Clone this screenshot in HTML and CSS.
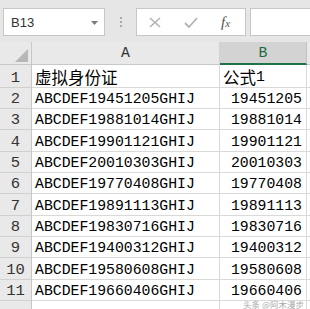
FILE: index.html
```html
<!DOCTYPE html>
<html lang="zh">
<head>
<meta charset="utf-8">
<title>Sheet</title>
<link rel="stylesheet" href="styles.css">
</head>
<body>
<div class="app">
  <div class="toolbar">
    <div class="namebox">
      <span class="name">B13</span>
      <svg class="caret" width="7" height="4" viewBox="0 0 7 4"><path d="M0 0H7L3.5 4Z" fill="#7a7a7a"/></svg>
    </div>
    <div class="grip">
      <span></span><span></span><span></span>
    </div>
    <div class="fbuttons">
      <svg class="ico" width="12" height="11" viewBox="0 0 12 11"><path d="M1 1L11 10M11 1L1 10" stroke="#b3b3b3" stroke-width="1.6" fill="none"/></svg>
      <svg class="ico" width="14" height="11" viewBox="0 0 14 11"><path d="M1 6L5 10L13 1" stroke="#b3b3b3" stroke-width="1.8" fill="none"/></svg>
      <span class="fx">f<small>x</small></span>
    </div>
    <div class="finput"></div>
  </div>

  <div class="sheet">
    <div class="corner"><span class="tri"></span></div>
    <div class="colhead">A</div>
    <div class="colhead sel">B</div>
    <div class="colhead"></div>

    <div class="rowhead">1</div><div class="cell cjk">虚拟身份证</div><div class="cell cjk">公式<span class="lat">1</span></div><div class="cell"></div>
    <div class="rowhead">2</div><div class="cell">ABCDEF19451205GHIJ</div><div class="cell num">19451205</div><div class="cell"></div>
    <div class="rowhead">3</div><div class="cell">ABCDEF19881014GHIJ</div><div class="cell num">19881014</div><div class="cell"></div>
    <div class="rowhead">4</div><div class="cell">ABCDEF19901121GHIJ</div><div class="cell num">19901121</div><div class="cell"></div>
    <div class="rowhead">5</div><div class="cell">ABCDEF20010303GHIJ</div><div class="cell num">20010303</div><div class="cell"></div>
    <div class="rowhead">6</div><div class="cell">ABCDEF19770408GHIJ</div><div class="cell num">19770408</div><div class="cell"></div>
    <div class="rowhead">7</div><div class="cell">ABCDEF19891113GHIJ</div><div class="cell num">19891113</div><div class="cell"></div>
    <div class="rowhead">8</div><div class="cell">ABCDEF19830716GHIJ</div><div class="cell num">19830716</div><div class="cell"></div>
    <div class="rowhead">9</div><div class="cell">ABCDEF19400312GHIJ</div><div class="cell num">19400312</div><div class="cell"></div>
    <div class="rowhead">10</div><div class="cell">ABCDEF19580608GHIJ</div><div class="cell num">19580608</div><div class="cell"></div>
    <div class="rowhead">11</div><div class="cell">ABCDEF19660406GHIJ</div><div class="cell num">19660406</div><div class="cell"></div>
    <div class="rowhead"></div><div class="cell"></div><div class="cell"></div><div class="cell"></div>
  </div>

  <div class="watermark">头条 @阿木漫步</div>
</div>
</body>
</html>
```

FILE: styles.css
```css
* { box-sizing: border-box; }
html, body { margin: 0; padding: 0; }
body { background: #ffffff; width: 310px; height: 309px; overflow: hidden; }

.app {
  position: relative;
  width: 310px;
  height: 309px;
  overflow: hidden;
  background: #e6e6e6;
}

.toolbar {
  height: 42px;
  display: flex;
  align-items: flex-start;
  padding-top: 8px;
  padding-left: 3px;
}

.namebox {
  width: 102px;
  height: 28px;
  background: #fff;
  border: 1px solid #c6c6c6;
  display: flex;
  align-items: center;
  justify-content: space-between;
  padding: 0 6px 0 7px;
}
.name {
  font-family: "Liberation Sans", Arial, sans-serif;
  font-size: 13px;
  color: #333;
}
.caret { margin-top: 1px; }

.grip {
  width: 31px;
  height: 28px;
  display: flex;
  flex-direction: column;
  align-items: center;
  justify-content: center;
  gap: 2px;
}
.grip span {
  width: 2px;
  height: 2px;
  background: #a9a9a9;
}

.fbuttons {
  width: 110px;
  height: 28px;
  background: #fff;
  border: 1px solid #c6c6c6;
  display: flex;
  align-items: center;
  padding-left: 12px;
  gap: 23px;
}
.fx {
  font-family: "Liberation Serif", "Times New Roman", serif;
  font-style: italic;
  font-size: 15px;
  color: #555;
}
.fx small { font-size: 11px; }

.finput {
  margin-left: 4px;
  flex: 1;
  height: 28px;
  background: #fff;
  border: 1px solid #c6c6c6;
  border-right: none;
}

.sheet {
  display: grid;
  grid-template-columns: 32px 188px 87px 1fr;
  grid-template-rows: 23px 23px repeat(3, 21px 21px 22px) 21px 21px;
  background: #fff;
  height: 267px;
  font-family: "Liberation Mono", "Courier New", monospace;
  font-size: 14.8px;
  color: #000;
}

.corner {
  background: #e9e9e9;
  border-right: 1px solid #c8c8c8;
  border-bottom: 1px solid #c8c8c8;
  position: relative;
}
.tri {
  position: absolute;
  right: 3px;
  bottom: 2px;
  width: 0;
  height: 0;
  border-left: 13px solid transparent;
  border-bottom: 13px solid #b7b7b7;
}

.colhead {
  background: #e9e9e9;
  border-right: 1px solid #d2d2d2;
  border-bottom: 1px solid #c8c8c8;
  display: flex;
  align-items: flex-end;
  justify-content: center;
  padding-bottom: 3px;
  color: #333;
  line-height: 1;
}
.colhead.sel {
  background: #d3d3d3;
  color: #1e6a3f;
  border-right-color: #c2c2c2;
  border-bottom: 2px solid #217346;
  padding-bottom: 2px;
}

.rowhead {
  background: #e9e9e9;
  border-right: 1px solid #c8c8c8;
  border-bottom: 1px solid #d0d0d0;
  display: flex;
  align-items: flex-end;
  justify-content: center;
  color: #333;
  line-height: 1;
  padding-bottom: 1px;
  font-size: 15.5px;
}

.cell {
  border-right: 1px solid #d9d9d9;
  border-bottom: 1px solid #d9d9d9;
  display: flex;
  align-items: flex-end;
  padding: 0 3px 1px 3px;
  white-space: nowrap;
  line-height: 1;
}
.cell.num { justify-content: flex-end; padding-right: 4px; }
.cell.cjk {
  font-family: "Noto Sans CJK SC", "Liberation Mono", sans-serif;
  font-size: 16.5px;
  padding-bottom: 2px;
}
.cell.cjk .lat {
  font-family: "Liberation Mono", monospace;
  font-size: 14.8px;
}

.watermark {
  position: absolute;
  right: 6px;
  bottom: 1px;
  font-family: "Noto Sans CJK SC", sans-serif;
  font-size: 8.5px;
  color: #9a9a9a;
  opacity: 0.85;
  line-height: 1;
}
```
